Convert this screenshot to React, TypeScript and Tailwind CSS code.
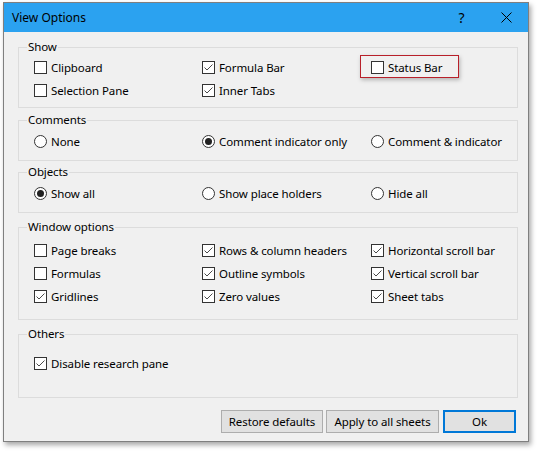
import React from "react";

function Check({ checked }: { checked?: boolean }) {
  return (
    <svg width="13" height="13" viewBox="0 0 13 13" className="shrink-0">
      <rect x="0.5" y="0.5" width="12" height="12" fill="#ffffff" stroke="#333333" />
      {checked && (
        <path d="M2.5 6.5 L5 9 L10.5 3.5" fill="none" stroke="#4a4a4a" strokeWidth="1" />
      )}
    </svg>
  );
}

function Radio({ checked }: { checked?: boolean }) {
  return (
    <svg width="13" height="13" viewBox="0 0 13 13" className="shrink-0">
      <circle cx="6.5" cy="6.5" r="6" fill="#ffffff" stroke="#333333" />
      {checked && <circle cx="6.5" cy="6.5" r="3.5" fill="#222222" />}
    </svg>
  );
}

function Item({ kind, checked, label }: { kind: "c" | "r"; checked?: boolean; label: string }) {
  return (
    <div className="h-[23px] flex items-center gap-[4px] whitespace-nowrap">
      {kind === "c" ? <Check checked={checked} /> : <Radio checked={checked} />}
      <span>{label}</span>
    </div>
  );
}

function Group({
  title,
  className,
  children,
}: {
  title: string;
  className: string;
  children: React.ReactNode;
}) {
  return (
    <fieldset className={"border border-[#dcdcdc] pl-[8px] pr-[8px] " + className}>
      <legend className="px-[1px] leading-[16px]">{title}</legend>
      <div className="ml-[7px]">{children}</div>
    </fieldset>
  );
}

export default function App() {
  return (
    <div className="w-[538px] h-[456px] bg-white pt-[2px] pl-[3px] font-['Noto_Sans',sans-serif] text-[11.5px] tracking-[-0.1px] text-black">
      <div className="w-[526px] h-[440px] border border-[#7f7f7f] bg-[#f0f0f0] shadow-[2px_3px_5px_rgba(0,0,0,0.35)] flex flex-col">
        <div className="h-[29px] bg-[#2ba2f0] flex items-center">
          <div className="pl-[8px] flex-1 leading-[16px] text-[12px] tracking-normal">View Options</div>
          <div className="w-[45px] flex justify-center text-[14px] leading-none">?</div>
          <div className="w-[44px] flex justify-center">
            <svg width="11" height="11" viewBox="0 0 11 11">
              <path d="M0.5 0.5 L10.5 10.5 M10.5 0.5 L0.5 10.5" stroke="#000" strokeWidth="1" fill="none" />
            </svg>
          </div>
        </div>

        <div className="pl-[14px] pr-[10px] pt-[7px] flex flex-col">
          <Group title="Show" className="pt-[1px] pb-[5px]">
            <div className="grid grid-cols-[168px_169px_1fr]">
              <Item kind="c" label="Clipboard" />
              <Item kind="c" checked label="Formula Bar" />
              <div className="relative">
                <Item kind="c" label="Status Bar" />
                <div className="absolute left-[-11px] top-[-1px] w-[99px] h-[23px] border border-[#b8202a] shadow-[1px_2px_4px_rgba(0,0,0,0.25)]" />
              </div>
              <Item kind="c" label="Selection Pane" />
              <Item kind="c" checked label="Inner Tabs" />
            </div>
          </Group>

          <Group title="Comments" className="mt-[4px] pt-[2px] pb-[7px]">
            <div className="grid grid-cols-[168px_169px_1fr]">
              <Item kind="r" label="None" />
              <Item kind="r" checked label="Comment indicator only" />
              <Item kind="r" label="Comment & indicator" />
            </div>
          </Group>

          <Group title="Objects" className="mt-[3px] pt-[2px] pb-[7px]">
            <div className="grid grid-cols-[168px_169px_1fr]">
              <Item kind="r" checked label="Show all" />
              <Item kind="r" label="Show place holders" />
              <Item kind="r" label="Hide all" />
            </div>
          </Group>

          <Group title="Window options" className="mt-[6px] pt-[4px] pb-[11px]">
            <div className="grid grid-cols-[168px_169px_1fr]">
              <Item kind="c" label="Page breaks" />
              <Item kind="c" checked label="Rows & column headers" />
              <Item kind="c" checked label="Horizontal scroll bar" />
              <Item kind="c" label="Formulas" />
              <Item kind="c" checked label="Outline symbols" />
              <Item kind="c" checked label="Vertical scroll bar" />
              <Item kind="c" checked label="Gridlines" />
              <Item kind="c" checked label="Zero values" />
              <Item kind="c" checked label="Sheet tabs" />
            </div>
          </Group>

          <Group title="Others" className="mt-[6px] pt-[10px] pb-[22px]">
            <Item kind="c" checked label="Disable research pane" />
          </Group>

          <div className="mt-[12px] pr-[2px] flex justify-end">
            <button className="w-[102px] h-[23px] border border-[#adadad] bg-[#e1e1e1] leading-none">
              Restore defaults
            </button>
            <button className="ml-[3px] w-[113px] h-[23px] border border-[#adadad] bg-[#e1e1e1] leading-none">
              Apply to all sheets
            </button>
            <button className="ml-[4px] w-[73px] h-[23px] border-2 border-[#0078d7] bg-[#e1e1e1] leading-none">
              Ok
            </button>
          </div>
        </div>
      </div>
    </div>
  );
}
